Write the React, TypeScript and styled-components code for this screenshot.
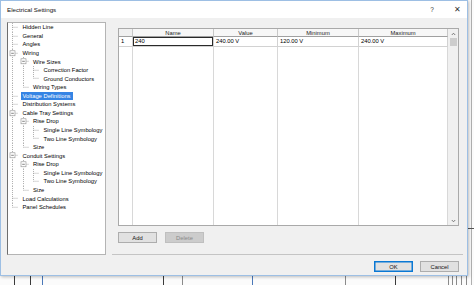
import React from "react";
import styled, { createGlobalStyle } from "styled-components";

const GlobalStyle = createGlobalStyle`
  html, body {
    margin: 0;
    padding: 0;
    background: #fff;
  }
  body {
    font-family: "Liberation Sans", Arial, sans-serif;
  }
  * {
    box-sizing: border-box;
  }
`;

const ROW_H = 8.57;
const GUIDE_W = 10.5;
const LINE_X = 4.5;

const Page = styled.div`
  position: relative;
  width: 474px;
  height: 285px;
  overflow: hidden;
  background: #fff;
`;

const Backdrop = styled.svg`
  position: absolute;
  left: 0;
  top: 0;
`;

const Dialog = styled.div`
  position: relative;
  width: 468px;
  height: 276px;
  border: 1px solid #9dbfe4;
  background: #f0f0f0;
  box-shadow: 1px 1px 3px rgba(0, 0, 0, 0.25);
  display: flex;
  flex-direction: column;
  font-size: 5.8px;
  color: #000;
`;

const TitleBar = styled.div`
  height: 17px;
  background: #fff;
  display: flex;
  align-items: center;
  padding-left: 6px;
`;

const Title = styled.div`
  flex: 1;
  font-size: 6.2px;
  color: #111;
`;

const CaptionButton = styled.div<{ $big?: boolean }>`
  width: 20px;
  height: 17px;
  display: flex;
  align-items: center;
  justify-content: center;
  font-size: ${(p) => (p.$big ? "7.5px" : "6.5px")};
  color: #333;
  margin-left: 5px;
`;

const Body = styled.div`
  flex: 1;
  display: flex;
  flex-direction: column;
`;

const Main = styled.div`
  display: flex;
  padding: 4px 0 0 6px;
`;

const TreePanel = styled.div`
  width: 99px;
  height: 233px;
  background: #fff;
  border: 1px solid #b4b4b4;
  border-left-color: #6d6d6d;
  overflow: hidden;
`;

const TreeRow = styled.div`
  height: ${ROW_H}px;
  display: flex;
  align-items: center;
`;

const GuideSvg = styled.svg`
  flex: none;
  display: block;
`;

const NodeLabel = styled.span<{ $selected?: boolean }>`
  margin-left: 2px;
  padding: 0 2px;
  height: 8px;
  line-height: 8px;
  white-space: nowrap;
  background: ${(p) => (p.$selected ? "#3584e4" : "transparent")};
  color: ${(p) => (p.$selected ? "#fff" : "#000")};
`;

const RightColumn = styled.div`
  width: 351px;
  margin-left: 6px;
  display: flex;
  flex-direction: column;
  padding: 6px 4px 0 6px;
  border-bottom: 1px solid #c4c4c4;
`;

const GridBox = styled.div`
  width: 341px;
  height: 198px;
  display: flex;
  border: 1px solid #a9a9a9;
  background: #fff;
`;

const Table = styled.div`
  flex: 1;
  display: grid;
  grid-template-columns: 14px 81px 64px 81px 89px;
  grid-template-rows: 8px 9.5px 1fr;
`;

const HeadCell = styled.div<{ $corner?: boolean }>`
  background: ${(p) => (p.$corner ? "#f0f0f0" : "#f7f7f7")};
  border-right: 1px solid #c8c8c8;
  border-bottom: 1px solid #a0a0a0;
  display: flex;
  align-items: center;
  justify-content: center;
  color: #222;
`;

const Cell = styled.div<{ $active?: boolean; $rowHead?: boolean }>`
  border-right: 1px solid #d2d2d2;
  border-bottom: 1px solid #d2d2d2;
  display: flex;
  align-items: center;
  padding-left: ${(p) => (p.$rowHead ? "2px" : "2px")};
  white-space: nowrap;
  box-shadow: ${(p) => (p.$active ? "inset 0 0 0 1px #2a2a2a" : "none")};
`;

const FillCell = styled.div`
  border-right: 1px solid #d8d8d8;
`;

const ScrollBar = styled.div`
  width: 10px;
  background: #f0f0f0;
  display: flex;
  flex-direction: column;
  align-items: center;
`;

const ScrollArrow = styled.div`
  height: 9px;
  display: flex;
  align-items: center;
  justify-content: center;
`;

const ScrollThumb = styled.div`
  width: 7px;
  height: 8px;
  background: #cdcdcd;
`;

const ScrollTrack = styled.div`
  flex: 1;
`;

const ButtonRow = styled.div<{ $end?: boolean }>`
  display: flex;
  gap: ${(p) => (p.$end ? "7px" : "8px")};
  justify-content: ${(p) => (p.$end ? "flex-end" : "flex-start")};
  margin-top: ${(p) => (p.$end ? "0" : "6px")};
  margin-bottom: ${(p) => (p.$end ? "0" : "10px")};
  padding: ${(p) => (p.$end ? "6px 8px 0 0" : "0")};
`;

const Button = styled.div<{ $disabled?: boolean; $default?: boolean }>`
  width: 39px;
  height: 11px;
  display: flex;
  align-items: center;
  justify-content: center;
  background: ${(p) => (p.$disabled ? "#cccccc" : "#e1e1e1")};
  border: 1px solid
    ${(p) => (p.$default ? "#0a78d4" : p.$disabled ? "#bfbfbf" : "#adadad")};
  box-shadow: ${(p) => (p.$default ? "inset 0 0 0 0.5px #0a78d4" : "none")};
  color: ${(p) => (p.$disabled ? "#8a8a8a" : "#111")};
`;

type Guide = "I" | "T" | "L";

type Node = {
  label: string;
  guides: Guide[];
  open?: boolean;
  selected?: boolean;
};

const tree: Node[] = [
  { label: "Hidden Line", guides: ["T"] },
  { label: "General", guides: ["T"] },
  { label: "Angles", guides: ["T"] },
  { label: "Wiring", guides: ["T"], open: true },
  { label: "Wire Sizes", guides: ["I", "T"], open: true },
  { label: "Correction Factor", guides: ["I", "I", "T"] },
  { label: "Ground Conductors", guides: ["I", "I", "L"] },
  { label: "Wiring Types", guides: ["I", "L"] },
  { label: "Voltage Definitions", guides: ["T"], selected: true },
  { label: "Distribution Systems", guides: ["T"] },
  { label: "Cable Tray Settings", guides: ["T"], open: true },
  { label: "Rise Drop", guides: ["I", "T"], open: true },
  { label: "Single Line Symbology", guides: ["I", "I", "T"] },
  { label: "Two Line Symbology", guides: ["I", "I", "L"] },
  { label: "Size", guides: ["I", "L"] },
  { label: "Conduit Settings", guides: ["T"], open: true },
  { label: "Rise Drop", guides: ["I", "T"], open: true },
  { label: "Single Line Symbology", guides: ["I", "I", "T"] },
  { label: "Two Line Symbology", guides: ["I", "I", "L"] },
  { label: "Size", guides: ["I", "L"] },
  { label: "Load Calculations", guides: ["T"] },
  { label: "Panel Schedules", guides: ["L"] },
];

const LINE = "#9a9a9a";

function GuideCell({ kind, box }: { kind: Guide; box?: boolean }) {
  const mid = ROW_H / 2;
  const vEnd = kind === "L" ? mid : ROW_H;
  const leaf = kind !== "I";
  return (
    <GuideSvg width={GUIDE_W} height={ROW_H} viewBox={`0 0 ${GUIDE_W} ${ROW_H}`}>
      <line x1={LINE_X} y1={0} x2={LINE_X} y2={vEnd} stroke={LINE} strokeWidth={0.8} strokeDasharray="1 1" />
      {leaf && (
        <line x1={LINE_X} y1={mid} x2={GUIDE_W} y2={mid} stroke={LINE} strokeWidth={0.8} strokeDasharray="1 1" />
      )}
      {box && (
        <g>
          <rect x={LINE_X - 2.5} y={mid - 2.5} width={5} height={5} fill="#fff" stroke="#8f8f8f" strokeWidth={0.6} />
          <line x1={LINE_X - 1.3} y1={mid} x2={LINE_X + 1.3} y2={mid} stroke="#333" strokeWidth={0.6} />
        </g>
      )}
    </GuideSvg>
  );
}

function SettingsTree() {
  return (
    <TreePanel>
      {tree.map((n, i) => (
        <TreeRow key={i}>
          {n.guides.map((g, j) => (
            <GuideCell key={j} kind={g} box={n.open && j === n.guides.length - 1} />
          ))}
          <NodeLabel $selected={n.selected}>{n.label}</NodeLabel>
        </TreeRow>
      ))}
    </TreePanel>
  );
}

const columns = ["Name", "Value", "Minimum", "Maximum"];
const rows = [["240", "240.00 V", "120.00 V", "240.00 V"]];

function VoltageGrid() {
  return (
    <GridBox>
      <Table>
        <HeadCell $corner />
        {columns.map((c) => (
          <HeadCell key={c}>{c}</HeadCell>
        ))}
        {rows.map((r, i) => (
          <React.Fragment key={i}>
            <Cell $rowHead>{i + 1}</Cell>
            {r.map((v, j) => (
              <Cell key={j} $active={j === 0}>
                {v}
              </Cell>
            ))}
          </React.Fragment>
        ))}
        {[0, 1, 2, 3, 4].map((k) => (
          <FillCell key={k} />
        ))}
      </Table>
      <ScrollBar>
        <ScrollArrow>
          <svg width="5" height="4" viewBox="0 0 5 4">
            <polyline points="0.8,3 2.5,1.2 4.2,3" fill="none" stroke="#606060" strokeWidth="0.8" />
          </svg>
        </ScrollArrow>
        <ScrollThumb />
        <ScrollTrack />
        <ScrollArrow>
          <svg width="5" height="4" viewBox="0 0 5 4">
            <polyline points="0.8,1 2.5,2.8 4.2,1" fill="none" stroke="#606060" strokeWidth="0.8" />
          </svg>
        </ScrollArrow>
      </ScrollBar>
    </GridBox>
  );
}

function CadBackdrop() {
  const dark = [14, 30, 163, 395];
  const blue = [42, 252];
  const gray = [182, 345, 448, 452, 456, 461, 466];
  return (
    <Backdrop width="474" height="285" viewBox="0 0 474 285">
      <rect width="474" height="285" fill="#fbfbfb" />
      {dark.map((x) => (
        <line key={"d" + x} x1={x + 0.5} y1={270} x2={x + 0.5} y2={285} stroke="#3a3a3a" strokeWidth="1" />
      ))}
      {blue.map((x) => (
        <line key={"b" + x} x1={x + 0.5} y1={270} x2={x + 0.5} y2={285} stroke="#4a78b8" strokeWidth="1" />
      ))}
      {gray.map((x) => (
        <line key={"g" + x} x1={x + 0.5} y1={270} x2={x + 0.5} y2={285} stroke="#8a8a8a" strokeWidth="1" />
      ))}
      <line x1="471.5" y1="0" x2="471.5" y2="285" stroke="#b0b0b0" strokeWidth="1" />
      <line x1="468" y1="228.5" x2="474" y2="228.5" stroke="#555" strokeWidth="1" />
    </Backdrop>
  );
}

export default function App() {
  return (
    <>
      <GlobalStyle />
      <Page>
        <CadBackdrop />
        <Dialog>
          <TitleBar>
            <Title>Electrical Settings</Title>
            <CaptionButton>?</CaptionButton>
            <CaptionButton $big>✕</CaptionButton>
          </TitleBar>
          <Body>
            <Main>
              <SettingsTree />
              <RightColumn>
                <VoltageGrid />
                <ButtonRow>
                  <Button>Add</Button>
                  <Button $disabled>Delete</Button>
                </ButtonRow>
              </RightColumn>
            </Main>
            <ButtonRow $end>
              <Button $default>OK</Button>
              <Button>Cancel</Button>
            </ButtonRow>
          </Body>
        </Dialog>
      </Page>
    </>
  );
}
